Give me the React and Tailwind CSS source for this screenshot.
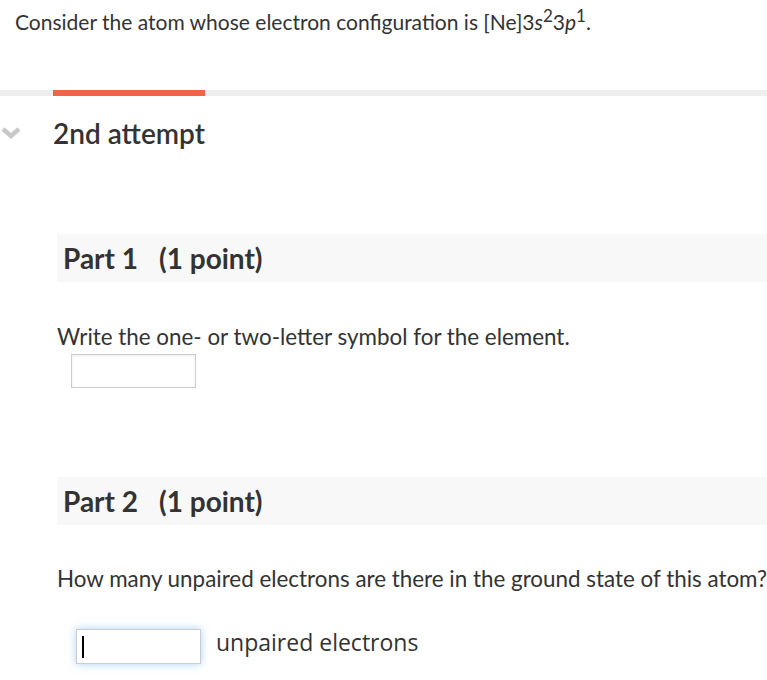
import React from 'react';

const Chevron = () => (
    <svg width="22" height="14" viewBox="0 0 22 14" className="shrink-0">
        <polyline points="3,3 11,10 19,3" fill="none" stroke="#c8c8c8" strokeWidth="4.5" />
    </svg>
);

const PartHeader = ({ label, points }) => (
    <div className="h-[48px] bg-[#f8f8f8] flex items-center pl-[6px] text-[28px] font-bold text-[#333]">
        <span>{label}</span>
        <span className="ml-[21px]">{points}</span>
    </div>
);

const App = () => {
    return (
        <div className="min-h-[680px] bg-white text-[#333] font-['Lato','Open_Sans',sans-serif]">
            <p className="pl-[15px] pt-[8px] text-[21px] leading-[28px]">
                Consider the atom whose electron configuration is [Ne]3<i>s</i>
                <sup className="text-[17px]">2</sup>3<i>p</i>
                <sup className="text-[17px]">1</sup>.
            </p>

            <div className="mt-[54px] h-[6px] bg-[#eeeeee] flex">
                <div className="ml-[53px] w-[152px] bg-[#ef6442]" />
            </div>

            <div className="mt-[19px] flex items-center">
                <div className="w-[53px] flex">
                    <Chevron />
                </div>
                <h2 className="text-[28px] leading-[36px] font-semibold text-[#333]">2nd attempt</h2>
            </div>

            <div className="pl-[57px] mt-[83px]">
                <PartHeader label="Part 1" points="(1 point)" />
                <p className="mt-[41px] text-[22.4px] leading-[28px] whitespace-nowrap">Write the one- or two-letter symbol for the element.</p>
                <input
                    type="text"
                    className="mt-[3px] ml-[14px] block w-[125px] h-[34px] border border-[#cccccc] bg-white shadow-[inset_0_1px_3px_rgba(0,0,0,0.08)] outline-none"
                />

                <div className="mt-[89px]">
                    <PartHeader label="Part 2" points="(1 point)" />
                </div>
                <p className="mt-[40px] text-[22.4px] leading-[28px] whitespace-nowrap">How many unpaired electrons are there in the ground state of this atom?</p>
                <div className="mt-[36px] ml-[19px] flex items-center gap-[15px]">
                    <div className="w-[125px] h-[35px] border border-[#cccccc] bg-white shadow-[0_0_8px_rgba(102,175,233,0.55)] flex items-center pl-[5px]">
                        <div className="w-[2px] h-[22px] bg-black" />
                    </div>
                    <span className="-mt-[9px] text-[23px] leading-[30px] font-['Open_Sans',sans-serif] text-[#333]">unpaired electrons</span>
                </div>
            </div>
        </div>
    );
};

export default App;
